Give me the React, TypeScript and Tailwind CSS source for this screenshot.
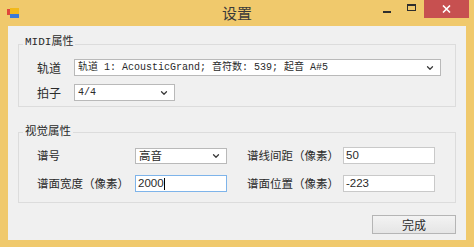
import { ChevronDown } from 'lucide-react';

const cjk = "font-['Noto_Sans_CJK_SC',sans-serif]";
const mono = "font-['Liberation_Mono','Noto_Sans_CJK_SC',monospace]";

function Combo({ value, className, textClass }: { value: string; className: string; textClass?: string }) {
  return (
    <div className={`flex items-center justify-between bg-white border border-[#b9b9b9] pl-[3px] pr-[5px] ${className}`}>
      <span className={`leading-none text-[#2a2a2a] whitespace-nowrap ${textClass ?? ''}`}>{value}</span>
      <ChevronDown className="w-[10px] h-[10px] text-[#3a3a3a]" strokeWidth={3} />
    </div>
  );
}

function Field({ value, focused, caret }: { value: string; focused?: boolean; caret?: boolean }) {
  return (
    <div
      className={`flex items-center w-[92px] h-[17px] bg-white border pl-[2px] font-['Liberation_Sans',sans-serif] text-[11.5px] text-[#2a2a2a] leading-none ${
        focused ? 'border-[#7eb4ea]' : 'border-[#c9c9c9]'
      }`}
    >
      {value}
      {caret && <span className="w-px h-[12px] bg-black" />}
    </div>
  );
}

function Group({ title, titleClass, className, children }: { title: string; titleClass: string; className: string; children: React.ReactNode }) {
  return (
    <div className={`relative ml-[10px] w-[438px] border border-[#dcdcdc] ${className}`}>
      <span className={`absolute -top-[8px] left-[4px] px-[2px] bg-[#f0f0f0] leading-none text-[#2a2a2a] ${titleClass}`}>{title}</span>
      {children}
    </div>
  );
}

export default function App() {
  return (
    <div className={`w-[474px] h-[247px] bg-[#f0c96c] flex flex-col ${cjk}`}>
      {/* title bar */}
      <div className="relative h-[26px] flex items-center">
        <svg className="absolute left-[7px] top-[8px]" width="13" height="10" viewBox="0 0 13 10">
          <rect x="0" y="1" width="4" height="6" fill="#e0463a" />
          <rect x="3" y="0" width="9" height="6" fill="#f2b91c" />
          <rect x="3" y="6" width="9" height="4" fill="#3a7ad8" />
        </svg>
        <span className="flex-1 text-center text-[15px] text-[#3a3a3a] pt-[1px]">设置</span>
        <div className="absolute left-[383px] top-[11px] w-[8px] h-[2px] bg-[#2e2e2e]" />
        <div className="absolute left-[407px] top-[4px] w-[9px] h-[7px] border border-[#2e2e2e] border-t-2" />
        <div className="absolute left-[424px] top-0 w-[45px] h-[18px] bg-[#c75050] flex items-center justify-center">
          <svg width="9" height="8" viewBox="0 0 9 8">
            <path d="M1 0.5 L8 7.5 M8 0.5 L1 7.5" stroke="#fff" strokeWidth="1.6" />
          </svg>
        </div>
      </div>

      {/* client area */}
      <div className="mx-[8px] h-[214px] bg-[#f0f0f0] flex flex-col">
        <Group title="MIDI属性" titleClass={`${mono} text-[11px]`} className="mt-[18px] h-[63px] flex flex-col">
          <div className="flex items-center mt-[14px] h-[17px]">
            <span className="ml-[18px] w-[37px] text-[12px] text-[#2a2a2a]">轨道</span>
            <Combo value="轨道 1: AcousticGrand; 音符数: 539; 起音 A#5" className="w-[367px] h-[17px]" textClass={`${mono} text-[10px]`} />
          </div>
          <div className="flex items-center mt-[8px] h-[17px]">
            <span className="ml-[18px] w-[37px] text-[12px] text-[#2a2a2a]">拍子</span>
            <Combo value="4/4" className="w-[101px] h-[17px]" textClass={`${mono} text-[10px]`} />
          </div>
        </Group>

        <Group title="视觉属性" titleClass="text-[11.5px]" className="mt-[25px] h-[71px] flex flex-col">
          <div className="flex items-center mt-[14px] h-[17px] text-[11.5px] text-[#2a2a2a]">
            <span className="ml-[18px] w-[98px]">谱号</span>
            <Combo value="高音" className="w-[92px] h-[16px]" textClass="text-[11.5px]" />
            <span className="ml-[20px] w-[96px]">谱线间距（像素）</span>
            <Field value="50" />
          </div>
          <div className="flex items-center mt-[11px] h-[17px] text-[11.5px] text-[#2a2a2a]">
            <span className="ml-[18px] w-[98px]">谱面宽度（像素）</span>
            <Field value="2000" focused caret />
            <span className="ml-[20px] w-[96px]">谱面位置（像素）</span>
            <Field value="-223" />
          </div>
        </Group>

        <div className="flex justify-end mt-[12px] mr-[10px]">
          <button className="w-[84px] h-[19px] border border-[#b5b5b5] bg-gradient-to-b from-[#f3f3f3] to-[#e5e5e5] text-[12px] text-[#2a2a2a] leading-none">
            完成
          </button>
        </div>
      </div>
    </div>
  );
}
